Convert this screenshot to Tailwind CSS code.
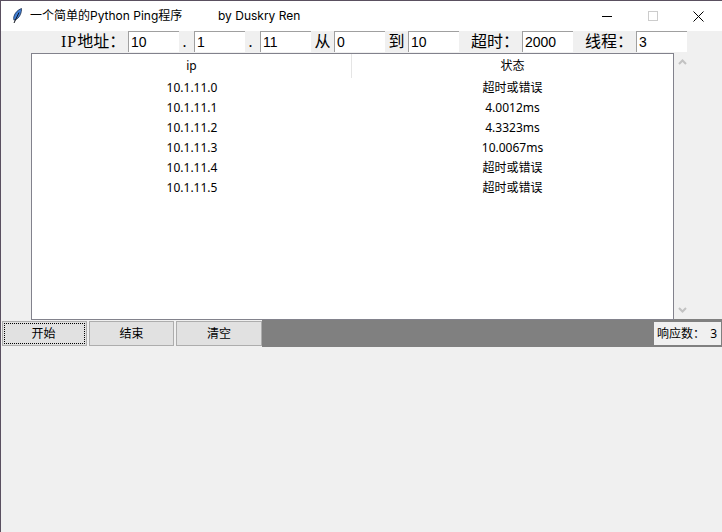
<!DOCTYPE html>
<html lang="zh">
<head>
<meta charset="UTF-8">
<title>一个简单的Python Ping程序</title>
<script src="https://cdn.jsdelivr.net/npm/@tailwindcss/browser@4"></script>
</head>
<body class="w-[722px] h-[532px] overflow-hidden bg-[#f0f0f0] text-black font-['Noto_Sans','Noto_Sans_CJK_SC',sans-serif]">
<div class="h-[532px] flex flex-col border-l border-t border-[#5a5060]">
  <!-- title bar -->
  <div class="h-[30px] shrink-0 bg-white flex items-center text-[12px] font-['Inter','Noto_Sans_CJK_SC',sans-serif]">
    <svg class="ml-[11px] w-[12px] h-[16px]" viewBox="0 0 12 16">
      <path d="M9.5 0.5C6 1.6 2.8 5 1.9 8.5C1.5 10 1.6 11.3 2 12.2C4.8 11.6 7.2 9.5 8.4 6.5C9.2 4.5 9.7 2 9.5 0.5Z" fill="#3f7fd8" stroke="#1f2f4a" stroke-width="0.8"/>
      <path d="M7 4.5L2 15" stroke="#10131a" stroke-width="1"/>
    </svg>
    <span class="ml-[6px] w-[188px] whitespace-nowrap">一个简单的Python Ping程序</span>
    <span class="whitespace-nowrap">by Duskry Ren</span>
    <div class="ml-auto flex items-center h-full">
      <div class="w-[48px] flex justify-center"><div class="w-[10px] h-px bg-black"></div></div>
      <div class="w-[44px] flex justify-center"><div class="w-[10px] h-[10px] border border-[#cccccc]"></div></div>
      <div class="w-[47px] flex justify-center">
        <svg class="w-[11px] h-[11px]" viewBox="0 0 11 11"><path d="M0.5 0.5L10.5 10.5M10.5 0.5L0.5 10.5" stroke="#000" stroke-width="1"/></svg>
      </div>
    </div>
  </div>

  <!-- address row -->
  <div class="h-[22px] shrink-0 flex pl-[60px] text-[16px] leading-[22px] font-['Liberation_Serif','Noto_Sans_CJK_SC',serif]">
    <span class="w-[67px] whitespace-nowrap"><span class="tracking-[1px]">IP</span>地址：</span>
    <input value="10" class="w-[51px] h-[21px] bg-white border-l border-t border-[#a0a0a0] pl-[2px] text-[14px] font-['Liberation_Sans'] outline-none">
    <span class="w-[15px] pr-[4px] text-center">.</span>
    <input value="1" class="w-[51px] h-[21px] bg-white border-l border-t border-[#a0a0a0] pl-[2px] text-[14px] font-['Liberation_Sans'] outline-none">
    <span class="w-[15px] pr-[4px] text-center">.</span>
    <input value="11" class="w-[51px] h-[21px] bg-white border-l border-t border-[#a0a0a0] pl-[2px] text-[14px] font-['Liberation_Sans'] outline-none">
    <span class="w-[23px] text-center">从</span>
    <input value="0" class="w-[51px] h-[21px] bg-white border-l border-t border-[#a0a0a0] pl-[2px] text-[14px] font-['Liberation_Sans'] outline-none">
    <span class="w-[23px] text-center">到</span>
    <input value="10" class="w-[51px] h-[21px] bg-white border-l border-t border-[#a0a0a0] pl-[2px] text-[14px] font-['Liberation_Sans'] outline-none">
    <span class="w-[63px] pl-[12px] whitespace-nowrap">超时：</span>
    <input value="2000" class="w-[51px] h-[21px] bg-white border-l border-t border-[#a0a0a0] pl-[2px] text-[14px] font-['Liberation_Sans'] outline-none">
    <span class="w-[63px] pl-[12px] whitespace-nowrap">线程：</span>
    <input value="3" class="w-[51px] h-[21px] bg-white border-l border-t border-[#a0a0a0] pl-[2px] text-[14px] font-['Liberation_Sans'] outline-none">
  </div>

  <!-- table with scrollbar -->
  <div class="h-[266px] shrink-0 flex pl-[30px]">
    <div class="relative w-[643px] h-[267px] border border-[#82828c] bg-white text-[12px]">
      <div class="grid grid-cols-[320px_1fr] h-[24px] leading-[24px] text-center">
        <div class="border-r border-[#e5e5e5]">ip</div>
        <div>状态</div>
      </div>
      <div class="grid grid-cols-[320px_1fr] auto-rows-[20px] leading-[20px] text-center">
        <div>10.1.11.0</div><div>超时或错误</div>
        <div>10.1.11.1</div><div>4.0012ms</div>
        <div>10.1.11.2</div><div>4.3323ms</div>
        <div>10.1.11.3</div><div>10.0067ms</div>
        <div>10.1.11.4</div><div>超时或错误</div>
        <div>10.1.11.5</div><div>超时或错误</div>
      </div>
    </div>
    <div class="w-[17px] flex flex-col justify-between items-center py-[6px]">
      <svg class="w-[9px] h-[6px]" viewBox="0 0 9 6"><path d="M1 5L4.5 1.5L8 5" fill="none" stroke="#c2c2c2" stroke-width="2"/></svg>
      <svg class="w-[9px] h-[6px]" viewBox="0 0 9 6"><path d="M1 1L4.5 4.5L8 1" fill="none" stroke="#c2c2c2" stroke-width="2"/></svg>
    </div>
  </div>

  <!-- buttons and count -->
  <div class="h-[28px] shrink-0 flex bg-[#808080] text-[12px]">
    <div class="flex gap-[2px] bg-[#f0f0f0] pl-[1px] pt-[2px] pb-px w-[261px]">
      <button class="w-[85px] h-[25px] pr-[2px] bg-[#e1e1e1] border border-[#adadad] outline-1 outline-dotted outline-black -outline-offset-3">开始</button>
      <button class="w-[85px] h-[25px] bg-[#e1e1e1] border border-[#adadad]">结束</button>
      <button class="w-[86px] h-[25px] bg-[#e1e1e1] border border-[#adadad]">清空</button>
    </div>
    <div class="ml-[392px] w-[67px] h-[23px] mt-[3px] bg-[#f0f0f0] flex justify-between pl-[3px] pr-[4px] leading-[23px]">
      <span>响应数：</span><span>3</span>
    </div>
  </div>
</div>
</body>
</html>
